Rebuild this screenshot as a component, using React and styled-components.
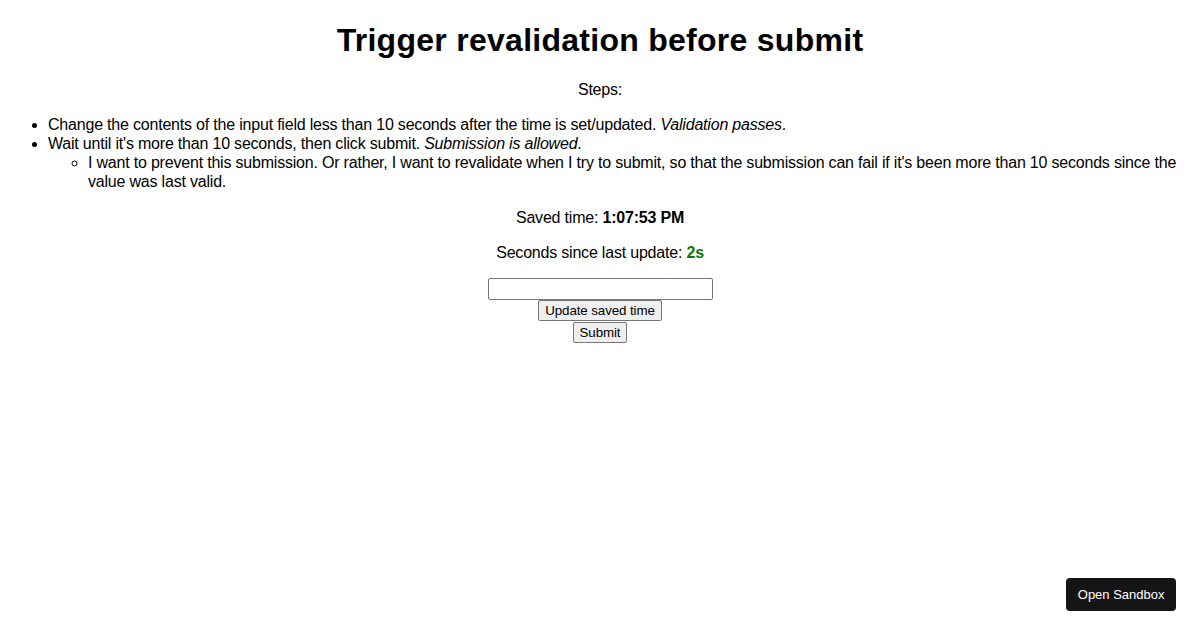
import React from 'react';
import styled, { createGlobalStyle } from 'styled-components';

const GlobalStyle = createGlobalStyle`
    body {
        margin: 8px;
        font-family: "Liberation Sans", Arial, sans-serif;
        font-size: 16px;
        line-height: 19px;
        letter-spacing: -0.2px;
        color: #000;
        background: #fff;
    }
`;

const Page = styled.div`
    text-align: center;
    > h1 {
        font-size: 32px;
        line-height: 37px;
        letter-spacing: 0.27px;
        font-weight: bold;
        margin: 14px 0 21px;
    }
    > p {
        margin: 16px 0;
    }
`;

const Steps = styled.ul`
    text-align: left;
    padding-left: 40px;
    margin: 16px 0 17px;
    list-style: disc;
    > li > ul {
        list-style: circle;
        padding-left: 40px;
        margin: 0;
    }
`;

const Value = styled.b`
    color: ${props => props.$color || '#000'};
`;

const Form = styled.form`
    display: flex;
    flex-direction: column;
    align-items: center;
    > input {
        box-sizing: border-box;
        width: 225px;
        height: 22px;
        padding: 1px 2px;
        border: 1px solid #767676;
        border-radius: 2px;
        font: 13.33px "Liberation Sans", Arial, sans-serif;
        margin: 0;
    }
`;

const Button = styled.button`
    box-sizing: border-box;
    font: 13.33px "Liberation Sans", Arial, sans-serif;
    letter-spacing: -0.1px;
    background: #efefef;
    color: #000;
    border: 1px solid #767676;
    border-radius: 2px;
    padding: 1px 6px;
    height: 21px;
    margin: 0 0 1px;
`;

const SandboxLink = styled.a`
    position: fixed;
    right: 24px;
    bottom: 19px;
    background: #151515;
    color: #fff;
    font: 13px "Liberation Sans", Arial, sans-serif;
    letter-spacing: 0;
    padding: 0 11.5px 0 12px;
    height: 33px;
    line-height: 33px;
    border-radius: 4px;
    text-decoration: none;
`;

export default function App() {
    return (
        <>
            <GlobalStyle />
            <Page>
                <h1>Trigger revalidation before submit</h1>
                <p>Steps:</p>
                <Steps>
                    <li>
                        Change the contents of the input field less than 10 seconds after the time is set/updated. <i>Validation passes</i>.
                    </li>
                    <li>
                        Wait until it's more than 10 seconds, then click submit. <i>Submission is allowed</i>.
                        <ul>
                            <li>
                                I want to prevent this submission. Or rather, I want to revalidate when I try to submit, so that the submission can fail if it's been more than 10 seconds since the value was last valid.
                            </li>
                        </ul>
                    </li>
                </Steps>
                <p>Saved time: <Value>1:07:53 PM</Value></p>
                <p>Seconds since last update: <Value $color="#0b7a0b">2s</Value></p>
                <Form onSubmit={e => e.preventDefault()}>
                    <input type="text" />
                    <Button type="button">Update saved time</Button>
                    <Button type="submit">Submit</Button>
                </Form>
            </Page>
            <SandboxLink href="#">Open Sandbox</SandboxLink>
        </>
    );
}
